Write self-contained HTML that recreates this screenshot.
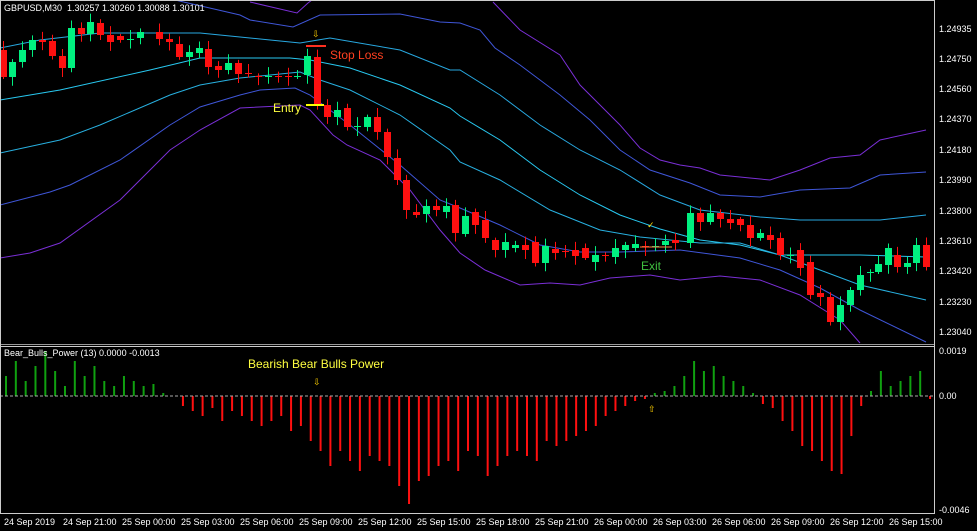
<!DOCTYPE html>
<html><head><meta charset="utf-8"><style>
html,body{margin:0;padding:0;background:#000;width:977px;height:531px;overflow:hidden}
body{position:relative;font-family:"Liberation Sans",sans-serif}
.t{position:absolute;color:#fff;font-size:9px;white-space:nowrap;line-height:10px}
svg{position:absolute;left:0;top:0}
</style></head><body>
<svg id="s" width="977" height="531" xmlns="http://www.w3.org/2000/svg">
<g fill="none" stroke-width="1">
<polyline stroke="#7a2fd6" points="250,2 297,13 308,3 312,0"/>
<polyline stroke="#7a2fd6" points="493,2 520,30 560,55 580,85 600,105 620,125 640,148 660,160 680,165 700,168 720,175 750,178 770,180 800,170 830,158 860,155 880,140 926,130"/>
<polyline stroke="#3f56d8" points="175,0 240,15 250,20 293,27 320,15 400,14 440,22 460,23 480,30 495,48 520,65 560,95 590,120 620,150 650,170 690,183 720,195 760,197 800,190 850,188 880,175 926,172"/>
<polyline stroke="#28a8e0" points="0,48 40,40 100,33 200,33 250,38 300,43 330,38 400,50 450,70 460,70 500,95 540,125 580,150 620,170 660,195 700,210 760,217 800,220 850,220 880,220 926,215"/>
<polyline stroke="#28c8f0" points="0,100 60,90 150,70 200,58 290,58 310,60 350,68 400,85 450,108 460,116 500,140 540,170 580,195 620,215 660,229 700,240 740,245 780,255 820,255 860,255 926,257"/>
<polyline stroke="#28b0e0" points="0,153 60,140 100,125 170,95 200,85 240,78 300,72 320,80 350,90 400,115 450,150 460,162 500,180 550,210 600,230 640,237 700,243 740,243 780,255 820,270 860,285 926,300"/>
<polyline stroke="#3f56d8" points="0,205 50,192 70,185 120,160 170,125 200,107 240,95 260,90 295,88 310,95 350,125 400,165 440,200 460,208 500,225 540,245 580,252 620,252 680,250 740,258 780,270 820,288 860,310 926,342"/>
<polyline stroke="#7a2fd6" points="0,258 30,253 60,243 120,200 170,150 200,130 240,108 300,105 310,110 333,135 347,145 380,160 410,190 440,230 460,253 485,270 520,285 550,283 580,285 610,278 650,275 680,280 720,276 760,280 800,295 840,320 860,343"/>
</g>
<g id="c"></g>
<g id="h"></g>
<line x1="0" y1="396" x2="934" y2="396" stroke="#aaa" stroke-dasharray="3,2"/>
<line x1="0" y1="344.5" x2="934" y2="344.5" stroke="#999"/>
<line x1="0" y1="346.5" x2="934" y2="346.5" stroke="#ccc"/>
<line x1="0.5" y1="0" x2="0.5" y2="514" stroke="#ccc"/>
<line x1="0" y1="0.5" x2="934" y2="0.5" stroke="#ccc"/>
<line x1="934.5" y1="0" x2="934.5" y2="514" stroke="#ccc"/>
<line x1="0" y1="513.5" x2="934" y2="513.5" stroke="#ccc"/>
<line x1="306" y1="46" x2="326" y2="46" stroke="#ff3020" stroke-width="2"/>
<line x1="306" y1="105" x2="324" y2="105" stroke="#ffff00" stroke-width="2"/>
<line x1="640" y1="247" x2="672" y2="247" stroke="#ff8040" stroke-width="1"/>
</svg>
<div class="t" style="left:4px;top:3px">GBPUSD,M30&nbsp; 1.30257 1.30260 1.30088 1.30101</div>
<div class="t" style="left:4px;top:348px">Bear_Bulls_Power (13) 0.0000 -0.0013</div>
<div class="t" style="left:312px;top:29px;color:#ffd000">⇩</div>
<div class="t" style="left:313px;top:377px;color:#ffd000">⇩</div>
<div class="t" style="left:648px;top:404px;color:#ffd000">⇧</div>
<div class="t" style="left:647px;top:220px;color:#ffd000">✓</div>
<div class="t" style="left:330px;top:48px;color:#ff4020;font-size:12px;line-height:14px">Stop Loss</div>
<div class="t" style="left:273px;top:101px;color:#ffff40;font-size:12px;line-height:14px">Entry</div>
<div class="t" style="left:641px;top:259px;color:#40c040;font-size:12px;line-height:14px">Exit</div>
<div class="t" style="left:248px;top:357px;color:#ffff40;font-size:12px;line-height:14px">Bearish Bear Bulls Power</div>
<div id="ax"></div>
<script>
(function(){
var ns="http://www.w3.org/2000/svg",c=document.getElementById('c'),h=document.getElementById('h');
function el(p,t,a){var e=document.createElementNS(ns,t);for(var k in a)e.setAttribute(k,a[k]);p.appendChild(e);}
var cd=[[3,50,77,'r'],[12,62,77,'g'],[22,50,62,'g'],[32,40,50,'g'],[42,40,42,'r'],[52,41,56,'r'],[62,56,68,'r'],[71,28,68,'g'],[81,28,34,'r'],[90,22,34,'g'],[100,23,35,'r'],[110,35,42,'r'],[120,36,40,'r'],[130,39,40,'g'],[140,32,38,'g'],[159,32,39,'r'],[169,39,42,'r'],[179,44,57,'r'],[189,52,57,'g'],[199,48,53,'g'],[208,49,67,'r'],[218,66,70,'r'],[228,63,70,'g'],[238,63,74,'r'],[248,73,74,'r'],[258,76,77,'r'],[268,76,77,'g'],[278,76,77,'r'],[288,76,77,'r'],[297,76,77,'g'],[307,56,75,'g'],[317,57,104,'r'],[327,105,117,'r'],[337,110,117,'g'],[347,108,127,'r'],[357,126,127,'g'],[367,117,127,'g'],[377,117,132,'r'],[387,132,157,'r'],[397,158,180,'r'],[406,180,210,'r'],[416,212,215,'r'],[426,206,214,'g'],[436,206,210,'r'],[446,206,212,'g'],[455,205,233,'r'],[465,216,234,'g'],[475,212,225,'r'],[485,220,238,'r'],[495,240,250,'r'],[505,242,250,'g'],[515,245,248,'g'],[525,245,250,'r'],[535,242,263,'r'],[545,246,263,'g'],[555,249,253,'r'],[565,251,252,'r'],[575,250,256,'r'],[585,248,258,'r'],[595,255,262,'g'],[605,255,256,'r'],[615,248,257,'g'],[625,245,250,'g'],[635,244,248,'g'],[645,246,247,'r'],[655,246,247,'g'],[665,241,245,'g'],[675,240,243,'r'],[690,213,243,'g'],[700,213,222,'r'],[710,213,222,'g'],[720,213,219,'r'],[730,219,223,'r'],[740,219,225,'r'],[750,225,238,'r'],[760,233,238,'g'],[770,235,240,'r'],[780,238,255,'r'],[790,255,256,'g'],[800,250,268,'r'],[810,262,295,'r'],[820,293,297,'r'],[830,297,322,'r'],[840,305,322,'g'],[850,290,305,'g'],[860,275,290,'g'],[870,272,273,'g'],[878,264,272,'g'],[888,248,265,'g'],[897,255,267,'r'],[907,263,267,'g'],[916,245,263,'g'],[926,245,267,'r']];
cd.forEach(function(k,i){var col=k[3]=='g'?'#00f080':'#ff1010';var a=k[1],b=k[2];
el(c,'line',{x1:k[0]+.5,x2:k[0]+.5,y1:a-2-Math.abs(Math.cos(i*1.7))*7,y2:b+2+Math.abs(Math.sin(i*1.3))*7,stroke:col});
el(c,'rect',{x:k[0]-3,y:a,width:7,height:Math.max(1,b-a),fill:col});});
var hv=[20,35,15,30,45,25,10,35,20,30,15,10,20,15,10,12,3,0,-10,-15,-20,-12,-25,-15,-20,-25,-30,-25,-20,-35,-30,-45,-55,-70,-55,-65,-75,-60,-65,-70,-90,-108,-85,-80,-70,-65,-75,-55,-60,-80,-70,-60,-55,-60,-65,-45,-50,-45,-40,-35,-30,-20,-15,-10,-5,-3,3,5,10,20,35,25,30,20,15,10,3,-8,-12,-25,-35,-50,-55,-65,-75,-78,-40,-10,5,25,10,15,20,25,-3];
for(var i=0;i<hv.length;i++){var x=6+i*9.83,v=hv[i];el(h,'rect',{x:x-1,y:v>0?396-v:396,width:2,height:Math.abs(v),fill:v>0?'#10a010':'#ff1010'});}
var ax=document.getElementById('ax'),s='';
var pl=[['1.24935',29],['1.24750',59],['1.24560',89],['1.24370',119],['1.24180',150],['1.23990',180],['1.23800',211],['1.23610',241],['1.23420',271],['1.23230',302],['1.23040',332],['0.0019',351],['0.00',396],['-0.0046',510]];
pl.forEach(function(p){s+='<div class="t" style="left:939px;top:'+(p[1]-5)+'px">'+p[0]+'</div>';});
var dl=['24 Sep 2019','24 Sep 21:00','25 Sep 00:00','25 Sep 03:00','25 Sep 06:00','25 Sep 09:00','25 Sep 12:00','25 Sep 15:00','25 Sep 18:00','25 Sep 21:00','26 Sep 00:00','26 Sep 03:00','26 Sep 06:00','26 Sep 09:00','26 Sep 12:00','26 Sep 15:00'];
dl.forEach(function(d,i){s+='<div class="t" style="left:'+(4+i*59)+'px;top:517px">'+d+'</div>';});
ax.innerHTML=s;
})();
</script>
</body></html>
